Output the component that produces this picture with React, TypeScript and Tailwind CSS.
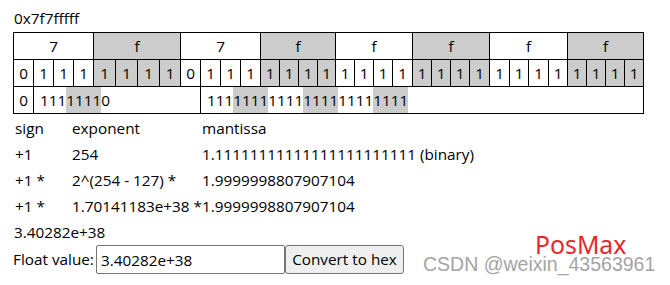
import React from "react";

const hex = ["7", "f", "7", "f", "f", "f", "f", "f"];
const colW = [
  20, 20, 20, 20,
  22, 22, 22, 21,
  20, 20, 20, 20,
  19, 19, 19, 18,
  19, 19, 19, 20,
  19, 19, 19, 20,
  20, 19, 20, 19,
  19, 19, 19, 19,
];

function bitsOf(h: string) {
  const v = parseInt(h, 16);
  return [3, 2, 1, 0].map((i) => ((v >> i) & 1).toString());
}

const FONT = '"Open Sans", "Noto Sans", sans-serif';

export default function App() {
  const gray = (i: number) => i % 2 === 1;
  return (
    <div
      className="relative w-[670px] h-[285px] bg-white text-black overflow-hidden"
      style={{ fontFamily: FONT }}
    >
      <div className="text-[15.3px]">
        <div className="pl-[14px] pt-[8px] leading-[20px] h-[32px]">0x7f7fffff</div>
        <table className="ml-[13px] w-[631px] border-collapse table-fixed">
          <colgroup>
            {colW.map((w, i) => (
              <col key={i} style={{ width: w }} />
            ))}
          </colgroup>
          <tbody>
            <tr className="h-[27px]">
              {hex.map((h, i) => (
                <td
                  key={i}
                  colSpan={4}
                  className={`border border-black text-center p-0 leading-[20px] ${gray(i) ? "bg-[#cccccc]" : "bg-white"}`}
                >
                  {h}
                </td>
              ))}
            </tr>
            <tr className="h-[27px]">
              {hex.flatMap((h, i) =>
                bitsOf(h).map((b, j) => (
                  <td
                    key={`${i}-${j}`}
                    className={`border border-black text-center p-0 leading-[20px] ${gray(i) ? "bg-[#cccccc]" : "bg-white"}`}
                  >
                    {b}
                  </td>
                ))
              )}
            </tr>
            <tr className="h-[27px]">
              <td className="border border-black text-center p-0 leading-[20px]">0</td>
              <td colSpan={8} className="border border-black p-0 pl-[6px] leading-[20px] whitespace-nowrap overflow-hidden">
                <span>111</span>
                <span className="bg-[#cccccc] py-[3px]">1111</span>
                <span>0</span>
              </td>
              <td colSpan={23} className="border border-black p-0 pl-[6px] leading-[20px] whitespace-nowrap">
                <span>111</span>
                <span className="bg-[#cccccc] py-[3px]">1111</span>
                <span>1111</span>
                <span className="bg-[#cccccc] py-[3px]">1111</span>
                <span>1111</span>
                <span className="bg-[#cccccc] py-[3px]">1111</span>
              </td>
            </tr>
          </tbody>
        </table>
        <div className="pl-[15px] pt-[1px] grid grid-cols-[57px_130px_1fr] auto-rows-[26px] items-center leading-[20px]">
          <div>sign</div>
          <div>exponent</div>
          <div>mantissa</div>
          <div>+1</div>
          <div>254</div>
          <div>1.11111111111111111111111 (binary)</div>
          <div>+1 *</div>
          <div>2^(254 - 127) *</div>
          <div>1.9999998807907104</div>
          <div>+1 *</div>
          <div className="whitespace-nowrap">1.70141183e+38 *</div>
          <div>1.9999998807907104</div>
        </div>
        <div className="pl-[14px] h-[26px] flex items-center">3.40282e+38</div>
        <div className="pl-[13px] flex items-center h-[29px]">
          <span className="w-[83px] shrink-0 whitespace-nowrap">Float value:</span>
          <input
            readOnly
            value="3.40282e+38"
            className="w-[189px] h-[29px] border border-[#767676] rounded-[2px] px-[4px] text-[15.3px] text-black outline-none"
            style={{ fontFamily: FONT }}
          />
          <button
            className="w-[119px] h-[29px] border border-[#767676] rounded-[3px] bg-[#efefef] text-[15.3px] text-black whitespace-nowrap"
            style={{ fontFamily: FONT }}
          >
            Convert to hex
          </button>
        </div>
      </div>
      <div
        className="absolute left-[535px] top-[229px] text-[24.8px] leading-[30px] text-[#e8262d]"
        style={{ fontFamily: '"Noto Sans", sans-serif' }}
      >
        PosMax
      </div>
      <div
        className="absolute left-[423px] top-[253px] text-[19.5px] leading-[22px] text-[#a4a4a4]"
        style={{ fontFamily: '"Liberation Sans", Arial, sans-serif', textShadow: "0 0 1px #fff" }}
      >
        CSDN @weixin_43563961
      </div>
    </div>
  );
}
